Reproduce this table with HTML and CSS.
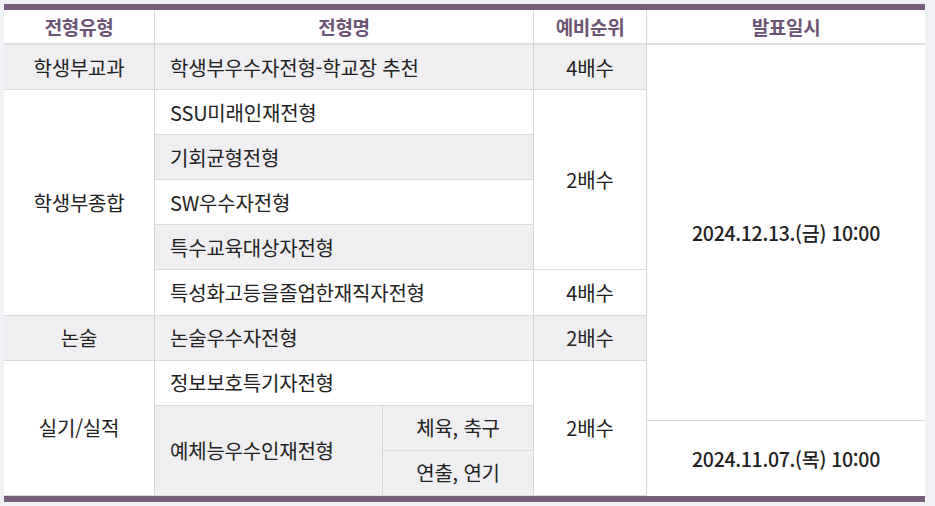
FILE: index.html
```html
<!DOCTYPE html>
<html lang="ko">
<head>
<meta charset="utf-8">
<title>예비순위 발표</title>
<link rel="stylesheet" href="styles.css">
</head>
<body>
<div class="table">
  <div class="th">전형유형</div>
  <div class="th c2">전형명</div>
  <div class="th">예비순위</div>
  <div class="th last">발표일시</div>

  <div class="td gray">학생부교과</div>
  <div class="td c2 left gray">학생부우수자전형-학교장 추천</div>
  <div class="td gray">4배수</div>
  <div class="td last datecol">
    <div class="date d1">2024.12.13.(금) 10:00</div>
    <div class="date d2">2024.11.07.(목) 10:00</div>
  </div>

  <div class="td r5">학생부종합</div>
  <div class="td c2 left">SSU미래인재전형</div>
  <div class="td r4">2배수</div>
  <div class="td c2 left gray">기회균형전형</div>
  <div class="td c2 left">SW우수자전형</div>
  <div class="td c2 left gray">특수교육대상자전형</div>
  <div class="td c2 left">특성화고등을졸업한재직자전형</div>
  <div class="td">4배수</div>

  <div class="td gray">논술</div>
  <div class="td c2 left gray">논술우수자전형</div>
  <div class="td gray">2배수</div>

  <div class="td r3">실기/실적</div>
  <div class="td c2 left">정보보호특기자전형</div>
  <div class="td r3">2배수</div>
  <div class="td r2 left gray">예체능우수인재전형</div>
  <div class="td gray">체육, 축구</div>
  <div class="td gray">연출, 연기</div>
</div>
</body>
</html>
```

FILE: styles.css
```css
html, body {
  margin: 0;
  padding: 0;
  background: #f0f1f4;
}
body {
  padding: 4px 0 0 4px;
  font-family: "Noto Sans CJK KR", "Noto Sans", sans-serif;
  color: #222;
}
.table {
  width: 921px;
  display: grid;
  grid-template-columns: 151px 228px 151px 113px 278px;
  grid-template-rows: 35px repeat(10, 45.1px);
  border-top: 6px solid #775e7c;
  border-bottom: 6px solid #775e7c;
  background: #fff;
}
.th, .td {
  box-sizing: border-box;
  display: flex;
  align-items: center;
  justify-content: center;
  border-right: 1px solid #d6d6d9;
  border-bottom: 1px solid #dadadd;
  background: #fff;
  white-space: nowrap;
}
.th {
  font-size: 19px;
  font-weight: 700;
  color: #6c5574;
  border-bottom: 2px solid #dedee1;
  letter-spacing: -0.3px;
}
.td {
  font-size: 20px;
  letter-spacing: -0.2px;
}
.last { border-right: none; }
.c2 { grid-column: span 2; }
.r2 { grid-row: span 2; }
.r3 { grid-row: span 3; }
.r4 { grid-row: span 4; }
.r5 { grid-row: span 5; }
.left {
  justify-content: flex-start;
  padding-left: 15px;
}
.gray { background: #efeef1; }
.datecol {
  grid-row: span 10;
  flex-direction: column;
  align-items: stretch;
  border-bottom: none;
  padding: 0;
}
.date {
  display: flex;
  align-items: center;
  justify-content: center;
  font-size: 19.5px;
  font-weight: 500;
  letter-spacing: -0.3px;
}
.d1 {
  height: 375.5px;
  border-bottom: 1px solid #dadadd;
  box-sizing: border-box;
}
.d2 { flex: 1; }
```
